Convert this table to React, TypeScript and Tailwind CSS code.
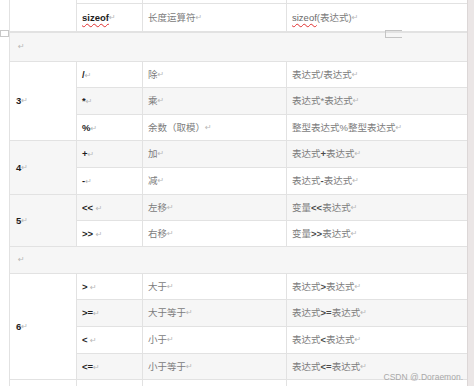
import React from "react";

const W = "bg-white";
const G = "bg-[#f6f6f6]";
const CELL = "flex items-center pl-[5px] text-[9.5px] leading-none whitespace-nowrap overflow-hidden";

function P({ space = false }: { space?: boolean }) {
  return (
    <span className="text-[#b8b8b8] text-[8px] font-normal font-[family-name:'DejaVu_Sans',sans-serif]">
      {space ? "\u00a0" : ""}↵
    </span>
  );
}

function Op({ t, space = false }: { t: string; space?: boolean }) {
  return (
    <span className="font-bold text-[#1e1e1e]">
      {t}
      <P space={space} />
    </span>
  );
}

function Zh({ children }: { children: React.ReactNode }) {
  return <span className="text-[#7c7c7c]">{children}</span>;
}

function B({ children }: { children: React.ReactNode }) {
  return <span className="font-bold text-[#4a4a4a]">{children}</span>;
}

function Num({ t, bg, span }: { t: string; bg: string; span: string }) {
  return (
    <div className={`${CELL} ${bg} ${span} pl-[6px]`}>
      <span className="font-bold text-[#1e1e1e]">{t}</span>
      <P />
    </div>
  );
}

type Row = { op: string; opSpace?: boolean; name: string; expr: React.ReactNode; bg: string };

function Cells({ r }: { r: Row }) {
  return (
    <>
      <div className={`${CELL} ${r.bg}`}>
        <Op t={r.op} space={r.opSpace} />
      </div>
      <div className={`${CELL} ${r.bg}`}>
        <Zh>{r.name}</Zh>
        <P />
      </div>
      <div className={`${CELL} ${r.bg} pl-[5px]`}>
        {r.expr}
        <P />
      </div>
    </>
  );
}

const e = (a: string, op: string, b: string, bold = true) => (
  <>
    <Zh>{a}</Zh>
    {bold ? <B>{op}</B> : <Zh>{op}</Zh>}
    <Zh>{b}</Zh>
  </>
);

const rows3: Row[] = [
  { op: "/", name: "除", expr: e("表达式", "/", "表达式", false), bg: W },
  { op: "*", name: "乘", expr: e("表达式", "*", "表达式", false), bg: G },
  { op: "%", name: "余数（取模）", expr: e("整型表达式", "%", "整型表达式", false), bg: W },
];
const rows4: Row[] = [
  { op: "+", name: "加", expr: e("表达式", "+", "表达式"), bg: G },
  { op: "-", name: "减", expr: e("表达式", "-", "表达式"), bg: W },
];
const rows5: Row[] = [
  { op: "<<", opSpace: true, name: "左移", expr: e("变量", "<<", "表达式"), bg: G },
  { op: ">>", opSpace: true, name: "右移", expr: e("变量", ">>", "表达式"), bg: W },
];
const rows6: Row[] = [
  { op: ">", opSpace: true, name: "大于", expr: e("表达式", ">", "表达式"), bg: W },
  { op: ">=", name: "大于等于", expr: e("表达式", ">=", "表达式"), bg: G },
  { op: "<", opSpace: true, name: "小于", expr: e("表达式", "<", "表达式"), bg: W },
  { op: "<=", name: "小于等于", expr: e("表达式", "<=", "表达式"), bg: G },
];

export default function App() {
  return (
    <div className="relative w-[474px] h-[386px] overflow-hidden bg-white flex font-[family-name:'Liberation_Sans','Noto_Sans_CJK_SC',sans-serif]">
      <div className="w-[9px] shrink-0" />
      <div className="w-[458px] shrink-0 flex flex-col">
        {/* upper table fragment */}
        <div className="grid grid-cols-[66px_65px_143px_180px] grid-rows-[3px_27px] gap-px bg-[#e2e2e2] pl-px pb-px">
          <div className={`${W} row-span-2`} />
          <div className={W} />
          <div className={W} />
          <div className={W} />
          <div className={`${CELL} ${W}`}>
            <span className="font-bold text-[#1e1e1e] underline decoration-wavy decoration-[#e03030] decoration-1 underline-offset-2">
              sizeof
            </span>
            <P />
          </div>
          <div className={`${CELL} ${W}`}>
            <Zh>长度运算符</Zh>
            <P />
          </div>
          <div className={`${CELL} ${W}`}>
            <span className="text-[#6a6a6a] underline decoration-wavy decoration-[#e03030] decoration-1 underline-offset-2">
              sizeof
            </span>
            <Zh>(表达式)</Zh>
            <P />
          </div>
        </div>
        <div className="h-[3px]" />
        {/* lower table */}
        <div className="grid grid-cols-[66px_65px_143px_180px] grid-rows-[28px_25px_26px_25px_26px_26px_25px_25px_26px_25px_26px_26px_25px_20px] gap-px bg-[#e2e2e2] pl-px pt-px">
          <div className={`${CELL} ${G} col-span-4 pl-[8px]`}>
            <P />
          </div>
          <Num t="3" bg={W} span="row-span-3" />
          {rows3.map((r, i) => (
            <Cells key={"a" + i} r={r} />
          ))}
          <Num t="4" bg={G} span="row-span-2" />
          {rows4.map((r, i) => (
            <Cells key={"b" + i} r={r} />
          ))}
          <Num t="5" bg={G} span="row-span-2" />
          {rows5.map((r, i) => (
            <Cells key={"c" + i} r={r} />
          ))}
          <div className={`${CELL} ${G} col-span-4 pl-[8px]`}>
            <P />
          </div>
          <Num t="6" bg={W} span="row-span-4" />
          {rows6.map((r, i) => (
            <Cells key={"d" + i} r={r} />
          ))}
          <div className={W} />
          <div className={W} />
          <div className={W} />
          <div className={W} />
        </div>
      </div>
      <div className="w-[7px] shrink-0 bg-[#ebe6e6] border-l border-[#dcd7d7]" />

      {/* page-break markers */}
      <div className="absolute left-0 top-[30px] w-[9px] h-[7px] border border-[#c8c8c8] bg-white" />
      <div className="absolute left-[385px] top-[30px] w-[17px] h-[8px] border-t border-l border-b border-[#c4c4c4]" />

      {/* watermark */}
      <div className="absolute right-[11px] top-[373px] text-[8.5px] leading-none text-[#a8a8a8] whitespace-nowrap">
        CSDN @.Doraemon.
      </div>
    </div>
  );
}
